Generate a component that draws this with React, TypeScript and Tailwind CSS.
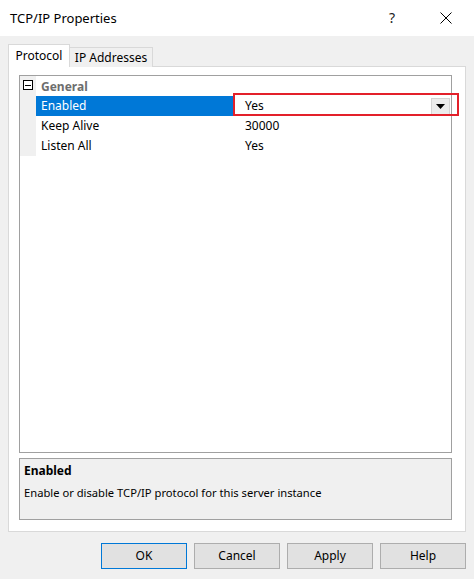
import React from "react";

const Row = ({
  label,
  value,
  selected,
}: {
  label: string;
  value: string;
  selected?: boolean;
}) => (
  <div className="flex h-[20px]">
    <div className="w-[16px] bg-[#f0f0f0]" />
    <div
      className={
        selected
          ? "w-[197px] bg-[#0078d7] text-white pl-[5px] flex items-center"
          : "w-[197px] pl-[5px] flex items-center text-black"
      }
    >
      {label}
    </div>
    <div className="flex-1 pl-[12px] flex items-center text-black">
      <span>{value}</span>
      {selected && (
        <div className="ml-auto mr-[1px] w-[19px] h-[17px] bg-[#ececec] border border-[#d4d4d4] flex items-center justify-center">
          <svg width="9" height="5" viewBox="0 0 9 5">
            <path d="M0 0 L9 0 L4.5 5 Z" fill="#000" />
          </svg>
        </div>
      )}
    </div>
  </div>
);

const Btn = ({ label, primary }: { label: string; primary?: boolean }) => (
  <div
    className={
      primary
        ? "w-[86px] h-[26px] bg-[#e1e1e1] border border-[#0078d7] flex items-center justify-center text-[12px] text-black"
        : "w-[86px] h-[26px] bg-[#e1e1e1] border border-[#adadad] flex items-center justify-center text-[12px] text-black"
    }
  >
    {label}
  </div>
);

export default function App() {
  return (
    <div className="w-[474px] h-[579px] bg-[#f0f0f0] flex flex-col overflow-hidden font-['Noto_Sans',sans-serif] text-[12px] leading-none">
      {/* Title bar */}
      <div className="h-[36px] bg-white flex items-center shrink-0">
        <span className="pl-[10px] text-[13px] text-black">TCP/IP Properties</span>
        <div className="ml-auto flex items-center gap-[8px] pr-[5px]">
          <div className="w-[46px] flex justify-center text-[14px] text-[#222]">?</div>
          <div className="w-[46px] flex justify-center">
            <svg width="12" height="12" viewBox="0 0 12 12">
              <path d="M0.5 0.5 L11.5 11.5 M11.5 0.5 L0.5 11.5" stroke="#000" strokeWidth="1" fill="none" />
            </svg>
          </div>
        </div>
      </div>

      {/* Body */}
      <div className="px-[8px] pt-[8px] flex flex-col">
        {/* Tabs */}
        <div className="flex items-end h-[23px] relative z-10 -mb-px">
          <div className="w-[62px] h-[23px] bg-white border border-b-0 border-[#d9d9d9] flex items-center justify-center text-black">
            Protocol
          </div>
          <div className="w-[83px] h-[20px] bg-[#f0f0f0] border border-l-0 border-b-0 border-[#d9d9d9] flex items-center justify-center text-black">
            IP Addresses
          </div>
        </div>

        {/* Tab page */}
        <div className="h-[466px] border border-[#d9d9d9] bg-white pl-[10px] pt-[8px] flex flex-col">
          {/* Property grid */}
          <div className="relative w-[433px] h-[378px] border border-[#a0a0a0] bg-white">
            <div className="flex h-[20px]">
              <div className="w-[16px] bg-[#f0f0f0] flex items-start justify-center pt-[4px]">
                <div className="w-[10px] h-[10px] border border-[#000] bg-white flex items-center justify-center">
                  <div className="w-[6px] h-px bg-black" />
                </div>
              </div>
              <div className="flex-1 pl-[5px] pt-[2px] flex items-center font-bold text-[#6d6d6d]">General</div>
            </div>
            <Row label="Enabled" value="Yes" selected />
            <Row label="Keep Alive" value="30000" />
            <Row label="Listen All" value="Yes" />

            {/* Red annotation box */}
            <div className="absolute left-[213px] top-[17px] w-[226px] h-[23px] border-2 border-[#e3202a]" />
          </div>

          {/* Description */}
          <div className="mt-[5px] w-[433px] h-[62px] bg-[#f0f0f0] border border-[#a0a0a0] px-[4px] pt-[6px] flex flex-col gap-[10px] text-black">
            <div className="font-bold">Enabled</div>
            <div className="text-[11.2px]">Enable or disable TCP/IP protocol for this server instance</div>
          </div>
        </div>
      </div>

      {/* Buttons */}
      <div className="mt-[11px] flex justify-end gap-[7px] pr-[8px]">
        <Btn label="OK" primary />
        <Btn label="Cancel" />
        <Btn label="Apply" />
        <Btn label="Help" />
      </div>
    </div>
  );
}
